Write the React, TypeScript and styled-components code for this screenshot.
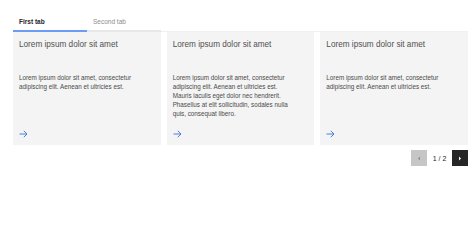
import React, { useState } from 'react';
import styled, { createGlobalStyle } from 'styled-components';

const GlobalStyle = createGlobalStyle`
  html, body {
    margin: 0;
    padding: 0;
    background: #ffffff;
    font-family: "Liberation Sans", Arial, sans-serif;
  }
`;

interface CardData {
  title: string;
  body: string;
}

const cards: CardData[] = [
  {
    title: 'Lorem ipsum dolor sit amet',
    body: 'Lorem ipsum dolor sit amet, consectetur adipiscing elit. Aenean et ultricies est.',
  },
  {
    title: 'Lorem ipsum dolor sit amet',
    body: 'Lorem ipsum dolor sit amet, consectetur adipiscing elit. Aenean et ultricies est. Mauris iaculis eget dolor nec hendrerit. Phasellus at elit sollicitudin, sodales nulla quis, consequat libero.',
  },
  {
    title: 'Lorem ipsum dolor sit amet',
    body: 'Lorem ipsum dolor sit amet, consectetur adipiscing elit. Aenean et ultricies est.',
  },
];

const tabs = ['First tab', 'Second tab'];

const ArrowIcon = () => (
  <svg width="9" height="8" viewBox="0 0 9 8" fill="none">
    <path d="M0.5 4H8M4.8 0.8L8 4L4.8 7.2" stroke="#3d70e0" strokeWidth="0.9" />
  </svg>
);

const ChevronLeft = () => (
  <svg width="4" height="5" viewBox="0 0 4 5">
    <path d="M3 0.5L1 2.5L3 4.5Z" fill="#8d8d8d" />
  </svg>
);

const ChevronRight = () => (
  <svg width="4" height="5" viewBox="0 0 4 5">
    <path d="M1 0.5L3 2.5L1 4.5Z" fill="#ffffff" />
  </svg>
);

const App: React.FC = () => {
  const [active, setActive] = useState(0);

  return (
    <>
      <GlobalStyle />
      <Page>
        <TabList>
          {tabs.map((t, i) => (
            <Tab key={t} $active={i === active} onClick={() => setActive(i)}>
              {t}
            </Tab>
          ))}
          <TabFill />
        </TabList>
        <CardGrid>
          {cards.map((c, i) => (
            <Card key={i}>
              <CardTitle>{c.title}</CardTitle>
              <CardBody>{c.body}</CardBody>
              <CardFooter>
                <ArrowIcon />
              </CardFooter>
            </Card>
          ))}
        </CardGrid>
        <Pagination>
          <PageButton $disabled>
            <ChevronLeft />
          </PageButton>
          <PageCount>1 / 2</PageCount>
          <PageButton>
            <ChevronRight />
          </PageButton>
        </Pagination>
      </Page>
    </>
  );
};

export default App;

const Page = styled.div`
  padding: 12px 6px 0 13px;
`;

const TabList = styled.div`
  display: flex;
  height: 20px;
`;

const Tab = styled.button<{ $active?: boolean }>`
  width: 74px;
  height: 20px;
  padding: 0 0 0 6px;
  margin: 0;
  border: none;
  background: none;
  text-align: left;
  font-family: inherit;
  font-size: 6.5px;
  font-weight: ${(p) => (p.$active ? 700 : 400)};
  color: ${(p) => (p.$active ? '#262626' : '#8d8d8d')};
  border-bottom: 2px solid ${(p) => (p.$active ? '#6b9cf5' : '#e8e8e8')};
  cursor: pointer;
`;

const TabFill = styled.div`
  flex: 1;
  border-bottom: 1px solid #f0f0f0;
`;

const CardGrid = styled.div`
  display: grid;
  grid-template-columns: repeat(3, 1fr);
  gap: 6px;
`;

const Card = styled.div`
  background: #f4f4f4;
  height: 113px;
  padding: 7px 20px 6px 6px;
  box-sizing: border-box;
  display: flex;
  flex-direction: column;
`;

const CardTitle = styled.h3`
  margin: 0;
  font-size: 8.2px;
  font-weight: 400;
  line-height: 11px;
  color: #505050;
`;

const CardBody = styled.p`
  margin: 23px 0 0;
  font-size: 6.3px;
  line-height: 9px;
  color: #4a4a4a;
`;

const CardFooter = styled.div`
  margin-top: auto;
  display: flex;
  height: 10px;
  align-items: center;
`;

const Pagination = styled.div`
  display: flex;
  justify-content: flex-end;
  align-items: center;
  margin-top: 5px;
`;

const PageButton = styled.button<{ $disabled?: boolean }>`
  width: 16px;
  height: 16px;
  padding: 0;
  border: none;
  display: flex;
  align-items: center;
  justify-content: center;
  background: ${(p) => (p.$disabled ? '#c6c6c6' : '#262626')};
  cursor: ${(p) => (p.$disabled ? 'not-allowed' : 'pointer')};
`;

const PageCount = styled.span`
  width: 25px;
  text-align: center;
  font-size: 7px;
  color: #262626;
`;
